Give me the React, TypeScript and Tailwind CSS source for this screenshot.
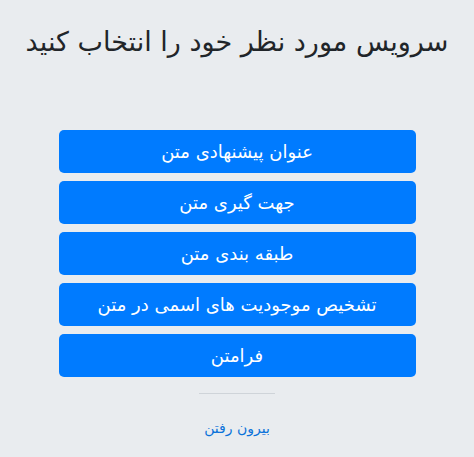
import React from "react";

const items = [
  "عنوان پیشنهادی متن",
  "جهت گیری متن",
  "طبقه بندی متن",
  "تشخیص موجودیت های اسمی در متن",
  "فرامتن",
];

export default function App() {
  return (
    <div
      dir="rtl"
      className="w-[474px] h-[457px] bg-[#e9ecef] flex flex-col items-center"
      style={{ fontFamily: '"DejaVu Sans", sans-serif' }}
    >
      <h1 className="mt-[22px] h-[40px] leading-[40px] text-[27px] text-[#212529] font-normal">
        سرویس مورد نظر خود را انتخاب کنید
      </h1>
      <div className="mt-[68px] w-[357px] flex flex-col gap-2">
        {items.map((t) => (
          <button
            key={t}
            className="h-[43px] w-full rounded-[5px] bg-[#007bff] text-white text-[18px] leading-none flex items-center justify-center"
          >
            {t}
          </button>
        ))}
      </div>
      <div className="mt-[16px] w-[76px] h-px bg-[#cfd4d9]" />
      <a className="mt-[24px] text-[14px] text-[#0b72d9]" href="#">
        بیرون رفتن
      </a>
    </div>
  );
}
